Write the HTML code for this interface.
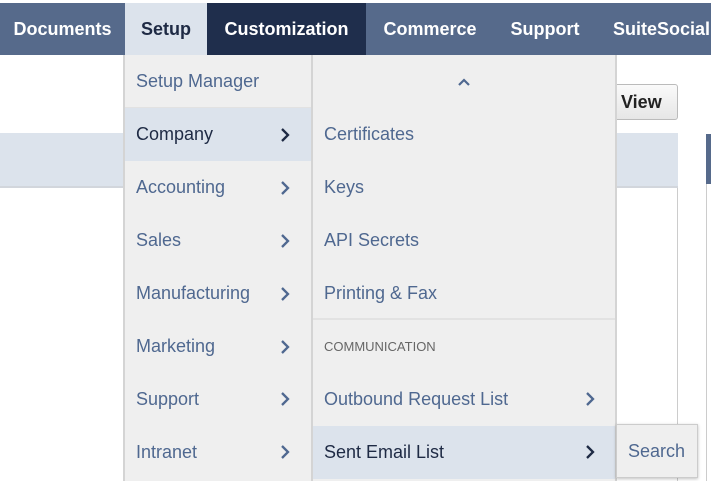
<!DOCTYPE html>
<html><head><style>
*{margin:0;padding:0;box-sizing:border-box}
body{width:711px;height:481px;overflow:hidden;background:#fff;font-family:"Liberation Sans",Arial,sans-serif;position:relative}
.nav{position:absolute;left:0;top:3px;width:711px;height:52px;background:#566a8b}
.tab{position:absolute;top:0;height:52px;line-height:52px;color:#fff;font-weight:bold;font-size:18px;text-align:center}
.m{position:absolute;background:#efefef}
.it{position:absolute;left:0;right:0;height:53px;line-height:53px;font-size:18px;color:#4f6890;padding-left:11px}
.it.h{background:#dce3ec;color:#1e2a44}
.ch{position:absolute;top:0;font-size:18px}
.ch svg{vertical-align:middle}
</style></head><body>
<div style="position:absolute;left:0;top:133px;width:678px;height:55px;background:#dce3ec;border-bottom:2px solid #d2d6dc"></div>
<div style="position:absolute;left:677px;top:188px;width:1px;height:293px;background:#ccc"></div>
<div style="position:absolute;left:706px;top:134px;width:5px;height:50px;background:#566a8b"></div>
<div style="position:absolute;left:706px;top:184px;width:1px;height:297px;background:#ccc"></div>
<div style="position:absolute;left:600px;top:84px;width:78px;height:36px;background:linear-gradient(#fafafa,#e6e6e6);border:1px solid #bbb;border-radius:3px;font-weight:bold;font-size:18px;line-height:34px;padding-left:20px;color:#222">View</div>
<div class="nav">
<div class="tab" style="left:0;width:125px">Documents</div>
<div class="tab" style="left:125px;width:82px;background:#dce3ec;color:#1e2a44">Setup</div>
<div class="tab" style="left:207px;width:159px;background:#1f2e4c">Customization</div>
<div class="tab" style="left:366px;width:128px">Commerce</div>
<div class="tab" style="left:494px;width:102px">Support</div>
<div class="tab" style="left:596px;width:130px;text-align:left;padding-left:17px">SuiteSocial</div>
</div>
<div class="m" style="left:123px;top:55px;width:188px;height:426px;border-left:2px solid #d4d4d4">
<div class="it" style="top:0;border-bottom:1px solid #e2e2e2">Setup Manager</div>
<div class="it h" style="top:53px">Company</div>
<div class="it" style="top:106px">Accounting</div>
<div class="it" style="top:159px">Sales</div>
<div class="it" style="top:212px">Manufacturing</div>
<div class="it" style="top:265px">Marketing</div>
<div class="it" style="top:318px">Support</div>
<div class="it" style="top:371px">Intranet</div>
</div>
<div class="m" style="left:311px;top:55px;width:306px;height:426px;border-left:2px solid #d4d4d4;border-right:2px solid #d4d4d4">
<div class="it" style="top:0;text-align:center;padding:0"><svg width="14" height="10" viewBox="0 0 14 10" style="vertical-align:middle"><path d="M2 8 L7 3 L12 8" stroke="#4f6890" stroke-width="2.2" fill="none"/></svg></div>
<div class="it" style="top:53px">Certificates</div>
<div class="it" style="top:106px">Keys</div>
<div class="it" style="top:159px">API Secrets</div>
<div class="it" style="top:212px;border-bottom:2px solid #e2e2e2">Printing &amp; Fax</div>
<div class="it" style="top:265px;font-size:13px;color:#666">COMMUNICATION</div>
<div class="it" style="top:318px">Outbound Request List</div>
<div class="it h" style="top:371px">Sent Email List</div>
</div>
<div style="position:absolute;left:616px;top:424px;width:82px;height:54px;background:#efefef;border:1px solid #ccc;box-shadow:0 1px 3px rgba(0,0,0,.25);font-size:18px;color:#4f6890;line-height:52px;padding-left:11px">Search</div>
<svg width="711" height="481" style="position:absolute;left:0;top:0;pointer-events:none">
<g fill="none" stroke-width="2.3">
<path d="M282 129 L288 135 L282 141" stroke="#1e2a44"/>
<path d="M282 182 L288 188 L282 194" stroke="#4f6890"/>
<path d="M282 235 L288 241 L282 247" stroke="#4f6890"/>
<path d="M282 288 L288 294 L282 300" stroke="#4f6890"/>
<path d="M282 341 L288 347 L282 353" stroke="#4f6890"/>
<path d="M282 393 L288 399 L282 405" stroke="#4f6890"/>
<path d="M282 446 L288 452 L282 458" stroke="#4f6890"/>
<path d="M587 393 L593 399 L587 405" stroke="#4f6890"/>
<path d="M587 446 L593 452 L587 458" stroke="#1e2a44"/>
</g></svg>
</body></html>
